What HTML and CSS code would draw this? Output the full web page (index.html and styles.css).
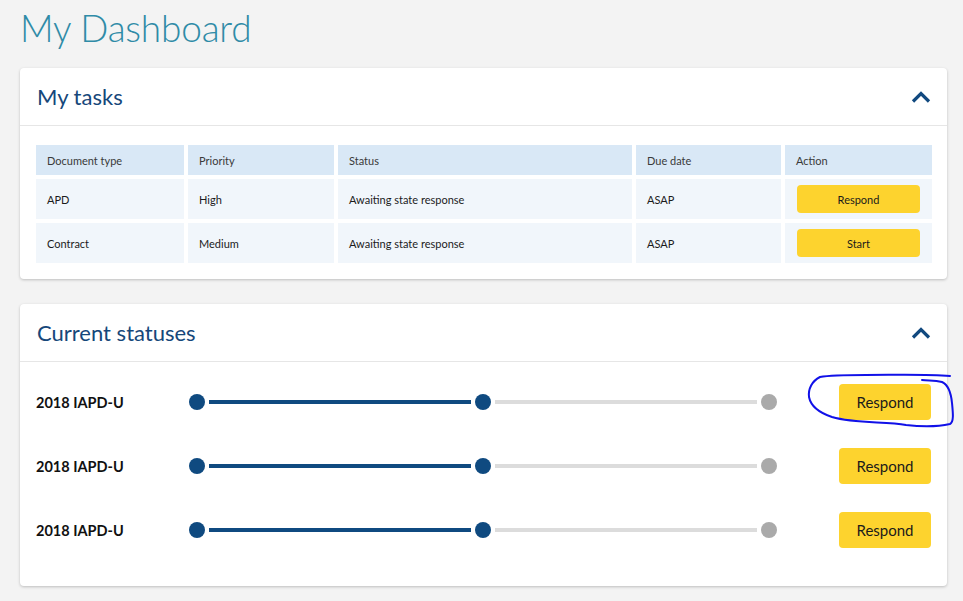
FILE: index.html
```html
<!DOCTYPE html>
<html lang="en">
<head>
<meta charset="utf-8">
<title>My Dashboard</title>
<link rel="stylesheet" href="styles.css">
</head>
<body>
<main class="page">
  <h1 class="page-title">My Dashboard</h1>

  <section class="card">
    <header class="card-header">
      <h2 class="card-title">My tasks</h2>
      <svg class="chevron" viewBox="0 0 20 12" width="20" height="12" aria-hidden="true"><path d="M2 10.5 L10 2.5 L18 10.5" fill="none" stroke="#11497f" stroke-width="3.2"/></svg>
    </header>
    <div class="card-body tasks-body">
      <table class="tasks">
        <colgroup>
          <col class="c1"><col class="c2"><col class="c3"><col class="c4"><col class="c5">
        </colgroup>
        <thead>
          <tr><th>Document type</th><th>Priority</th><th>Status</th><th>Due date</th><th>Action</th></tr>
        </thead>
        <tbody>
          <tr><td>APD</td><td>High</td><td>Awaiting state response</td><td>ASAP</td><td class="act"><button class="btn btn-sm">Respond</button></td></tr>
          <tr><td>Contract</td><td>Medium</td><td>Awaiting state response</td><td>ASAP</td><td class="act"><button class="btn btn-sm">Start</button></td></tr>
        </tbody>
      </table>
    </div>
  </section>

  <section class="card">
    <header class="card-header">
      <h2 class="card-title">Current statuses</h2>
      <svg class="chevron" viewBox="0 0 20 12" width="20" height="12" aria-hidden="true"><path d="M2 10.5 L10 2.5 L18 10.5" fill="none" stroke="#11497f" stroke-width="3.2"/></svg>
    </header>
    <div class="card-body status-body">
      <div class="status-row annotated">
        <span class="status-label">2018 IAPD-U</span>
        <div class="progress">
          <span class="dot done"></span><span class="line done"></span><span class="dot done"></span><span class="line"></span><span class="dot"></span>
        </div>
        <button class="btn btn-md">Respond</button>
        <svg class="scribble" viewBox="0 0 150 60" width="150" height="60" aria-hidden="true">
          <path d="M144 3 C120 1 90 2 60 2 C40 2 25 2 14 4 C6 8 2 16 3 24 C5 34 14 40 26 44 C50 51 80 48 100 52 C118 54 135 53 144 51 C148 49 147 40 146 30 C145 20 143 12 136 9 C128 7 122 8 116 7" fill="none" stroke="#1111e8" stroke-width="2" stroke-linecap="round"/>
        </svg>
      </div>
      <div class="status-row">
        <span class="status-label">2018 IAPD-U</span>
        <div class="progress">
          <span class="dot done"></span><span class="line done"></span><span class="dot done"></span><span class="line"></span><span class="dot"></span>
        </div>
        <button class="btn btn-md">Respond</button>
      </div>
      <div class="status-row">
        <span class="status-label">2018 IAPD-U</span>
        <div class="progress">
          <span class="dot done"></span><span class="line done"></span><span class="dot done"></span><span class="line"></span><span class="dot"></span>
        </div>
        <button class="btn btn-md">Respond</button>
      </div>
    </div>
  </section>
</main>
</body>
</html>
```

FILE: styles.css
```css
* { box-sizing: border-box; }

html, body {
  margin: 0;
  padding: 0;
  background: #f3f3f3;
}

body {
  font-family: "Lato", "Noto Sans", "Liberation Sans", sans-serif;
  color: #222;
}

.page {
  padding: 0 16px 0 20px;
  width: 963px;
}

.page-title {
  margin: 0;
  padding-top: 6px;
  height: 68px;
  font-weight: 300;
  font-size: 37px;
  line-height: 44px;
  color: #2f8ba7;
  letter-spacing: -0.2px;
}

.card {
  width: 927px;
  background: #fff;
  border-radius: 4px;
  box-shadow: 0 1px 3px rgba(0, 0, 0, 0.22);
  margin-bottom: 25px;
}

.card-header {
  height: 58px;
  display: flex;
  align-items: center;
  justify-content: space-between;
  padding: 0 16px 0 17px;
  border-bottom: 1px solid #e6e6e6;
}

.card-title {
  margin: 0;
  font-weight: 400;
  font-size: 22px;
  color: #16477a;
}

.chevron {
  display: block;
  margin-top: 1px;
}

.tasks-body {
  padding: 15px 12px 12px 12px;
}

.tasks {
  width: 904px;
  table-layout: fixed;
  border-collapse: separate;
  border-spacing: 4px;
  font-size: 11px;
}

.tasks .c1 { width: 148px; }
.tasks .c2 { width: 146px; }
.tasks .c3 { width: 294px; }
.tasks .c4 { width: 145px; }
.tasks .c5 { width: 147px; }

.tasks th {
  background: #d9e8f6;
  height: 30px;
  padding: 0 11px;
  text-align: left;
  font-weight: 400;
  color: #3a3a3a;
}

.tasks td {
  background: #f1f6fb;
  height: 40px;
  padding: 0 11px;
  color: #1b1b1b;
}

.tasks td.act {
  padding: 0 12px;
}

.btn {
  border: 0;
  background: #fdd32e;
  border-radius: 4px;
  font-family: inherit;
  color: #1b1b1b;
  cursor: pointer;
}

.btn-sm {
  display: block;
  width: 123px;
  height: 28px;
  font-size: 11px;
}

.btn-md {
  width: 92px;
  height: 36px;
  font-size: 15px;
}

.status-body {
  padding: 8px 16px 24px 16px;
}

.status-row {
  position: relative;
  height: 64px;
  display: flex;
  align-items: center;
}

.status-label {
  width: 153px;
  font-weight: 700;
  font-size: 14.5px;
  color: #111;
}

.progress {
  width: 588px;
  display: flex;
  align-items: center;
}

.dot {
  width: 16px;
  height: 16px;
  border-radius: 50%;
  background: #aaaaaa;
  flex: none;
}

.dot.done { background: #0f4a80; }

.line {
  flex: 1;
  height: 4px;
  margin: 0 4px;
  background: #dcdcdc;
}

.line.done { background: #0f4a80; }

.status-row .btn-md {
  margin-left: auto;
}

.scribble {
  position: absolute;
  left: 770px;
  top: 3px;
  overflow: visible;
  pointer-events: none;
}
```
